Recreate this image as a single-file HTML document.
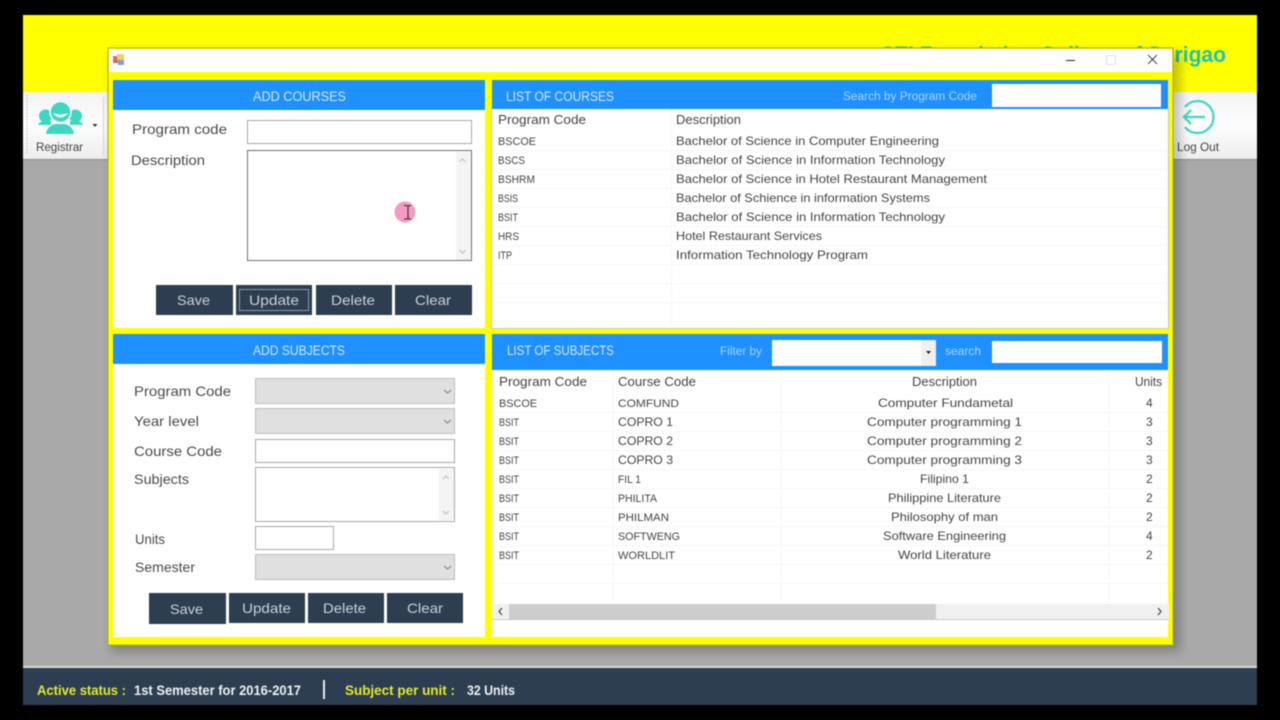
<!DOCTYPE html>
<html><head><meta charset="utf-8"><style>
html,body{margin:0;padding:0;background:#000;overflow:hidden}
svg{display:block;filter:blur(.4px)}
text{font-family:"Liberation Sans",sans-serif;fill:#444}
.d text{font-size:12px}
.d text.c{font-size:11px}
.l text{font-size:14px;fill:#4a4a4a}
.b text{font-size:14px;fill:#c9d2da}
.h text{font-size:13.5px;fill:#cfe8ff}
.s text{font-size:13.5px;font-weight:bold}
</style></head><body>
<svg width="1280" height="720" viewBox="0 0 1280 720" xmlns="http://www.w3.org/2000/svg">
<defs>
<linearGradient id="tb" x1="0" y1="0" x2="0" y2="1"><stop offset="0" stop-color="#f4f4f4"/><stop offset=".5" stop-color="#fdfdfd"/><stop offset="1" stop-color="#ececec"/></linearGradient>
<filter id="sh" x="-5%" y="-5%" width="110%" height="110%"><feGaussianBlur stdDeviation="5"/></filter>
</defs>
<rect width="1280" height="720" fill="#000"/>
<rect x="23" y="15" width="1234" height="77" fill="#ff0"/>
<text x="881" y="62" font-size="22" font-weight="bold" style="fill:#25c2ad" textLength="345" lengthAdjust="spacingAndGlyphs">STI Foundation College of Surigao</text>
<rect x="23" y="92" width="1234" height="68" fill="url(#tb)"/>
<rect x="23" y="159" width="1234" height="1" fill="#8a8a8a"/>
<rect x="23" y="160" width="1234" height="506" fill="#a9a9a9"/>
<rect x="23" y="666" width="1234" height="2" fill="#d8d8d8"/>
<rect x="23" y="668" width="1234" height="37" fill="#2c3e50"/>
<line x1="27" y1="95" x2="27" y2="155" stroke="#aaa" stroke-dasharray="1 2"/>
<rect x="103" y="97" width="1" height="58" fill="#d8d8d8"/>

<g fill="#3fd7c1">
<circle cx="45.500" cy="116" r="6.500"/><circle cx="75.500" cy="116" r="6.500"/>
<path d="M38 125q1-4 8-4h5v4zM83 125q-1-4-8-4h-5v4z"/>
<path d="M46 134q1-8 9-10h10q8 2 9 10z"/>
<circle cx="60.500" cy="112" r="10.500" stroke="#fafafa" stroke-width="1.500"/>
</g>
<path d="M52.500 113q8 9 16 0q-8 3-16 0z" fill="#fafafa"/>
<path d="M92.500 124h5l-2.500 3z" fill="#333"/>
<text x="36" y="151" font-size="11.500" textLength="47" lengthAdjust="spacingAndGlyphs">Registrar</text>

<path d="M1185 107a16 16 0 1 1 0 20" fill="none" stroke="#3fd7c1" stroke-width="2.200"/>
<path d="M1205 117h-21M1191 110l-7 7 7 7" fill="none" stroke="#3fd7c1" stroke-width="2.200"/>
<text x="1177" y="151" font-size="11.500" textLength="42" lengthAdjust="spacingAndGlyphs">Log Out</text>

<g class="s">
<text x="37" y="695" style="fill:#e4e82e" textLength="89" lengthAdjust="spacingAndGlyphs">Active status :</text>
<text x="134" y="695" style="fill:#eef1f3" textLength="167" lengthAdjust="spacingAndGlyphs">1st Semester for 2016-2017</text>
<text x="345" y="695" style="fill:#e4e82e" textLength="110" lengthAdjust="spacingAndGlyphs">Subject per unit :</text>
<text x="467" y="695" style="fill:#eef1f3" textLength="48" lengthAdjust="spacingAndGlyphs">32 Units</text>
</g>
<rect x="323" y="680" width="2" height="19" fill="#e8e8e8"/>

<rect x="111" y="52" width="1070" height="600" fill="#000" opacity=".22" filter="url(#sh)"/>
<rect x="108" y="48" width="1065" height="597" fill="#ff0"/>
<rect x="108" y="48" width="1065" height="597" fill="none" stroke="#a8a830"/>
<rect x="109" y="49" width="1063" height="23" fill="#fff"/>

<rect x="113" y="56" width="5" height="7" fill="#dc6a5c"/>
<rect x="117" y="54" width="7" height="6" fill="#f3cf6a"/>
<rect x="118" y="60" width="6" height="5" fill="#7aa2de"/>

<rect x="1066" y="60" width="9" height="1" fill="#222"/>
<rect x="1106.500" y="55.500" width="9" height="9" fill="none" stroke="#e2e2e2"/>
<path d="M1148 55l9 9M1157 55l-9 9" stroke="#444" stroke-width="1"/>

<rect x="113" y="80" width="372" height="248" fill="#fff"/>
<rect x="113" y="80" width="372" height="30" fill="#1e90ff"/>
<rect x="113" y="334" width="372" height="303" fill="#fff"/>
<rect x="113" y="334" width="372" height="30" fill="#1e90ff"/>
<rect x="492" y="80" width="676" height="248" fill="#fff"/>
<rect x="491.500" y="108.500" width="677" height="220" fill="none" stroke="#c4c4c4"/>
<rect x="492" y="80" width="676" height="29" fill="#1e90ff"/>
<rect x="492" y="334" width="676" height="303" fill="#fff"/>
<rect x="492" y="334" width="676" height="36" fill="#1e90ff"/>

<g class="h">
<text x="253" y="101" textLength="93" lengthAdjust="spacingAndGlyphs">ADD COURSES</text>
<text x="253" y="355" textLength="92" lengthAdjust="spacingAndGlyphs">ADD SUBJECTS</text>
<text x="506" y="101" textLength="108" lengthAdjust="spacingAndGlyphs">LIST OF COURSES</text>
<text x="507" y="355" textLength="107" lengthAdjust="spacingAndGlyphs">LIST OF SUBJECTS</text>
</g>
<text x="843" y="100" font-size="11.500" style="fill:#a8d4ff" textLength="134" lengthAdjust="spacingAndGlyphs">Search by Program Code</text>
<text x="720" y="355" font-size="11.500" style="fill:#a8d4ff" textLength="42" lengthAdjust="spacingAndGlyphs">Filter by</text>
<text x="945" y="355" font-size="11.500" style="fill:#a8d4ff" textLength="36" lengthAdjust="spacingAndGlyphs">search</text>
<rect x="992" y="84" width="169" height="23" fill="#fff"/>
<rect x="772" y="340" width="164" height="26" fill="#fff"/>
<rect x="921" y="340" width="15" height="26" fill="#f0f0f0"/>
<path d="M926 351h5l-2.500 3z" fill="#222"/>
<rect x="992" y="341" width="170" height="22" fill="#fff"/>

<g fill="#fff" stroke="#a8a8a8">
<rect x="247.500" y="120.500" width="224" height="23"/>
<rect x="255.500" y="439.500" width="199" height="23"/>
<rect x="255.500" y="526.500" width="78" height="23"/>
<rect x="255.500" y="467.500" width="199" height="54"/>
</g>
<rect x="247.500" y="150.500" width="224" height="110" fill="#fff" stroke="#707070"/>
<rect x="456" y="152" width="15" height="108" fill="#f4f4f4"/>
<rect x="439" y="469" width="15" height="51" fill="#f4f4f4"/>
<g fill="none" stroke="#c0c0c0" stroke-width="1.200">
<path d="M459.500 162l3-3 3 3M459.500 250l3 3 3-3M443 479l3-3 3 3M443 511l3 3 3-3"/>
</g>
<g fill="#e0e0e0" stroke="#bcbcbc">
<rect x="255.500" y="378.500" width="199" height="25"/>
<rect x="255.500" y="408.500" width="199" height="25"/>
<rect x="255.500" y="554.500" width="199" height="25"/>
</g>
<g fill="none" stroke="#808080" stroke-width="1.100">
<path d="M444 390l3.500 3 3.500-3M444 420l3.500 3 3.500-3M444 566l3.500 3 3.500-3"/>
</g>

<g class="l">
<text x="132" y="134" textLength="95" lengthAdjust="spacingAndGlyphs">Program code</text>
<text x="131" y="165" textLength="74" lengthAdjust="spacingAndGlyphs">Description</text>
<text x="134" y="396" textLength="97" lengthAdjust="spacingAndGlyphs">Program Code</text>
<text x="134" y="426" textLength="65" lengthAdjust="spacingAndGlyphs">Year level</text>
<text x="134" y="456" textLength="88" lengthAdjust="spacingAndGlyphs">Course Code</text>
<text x="134" y="484" textLength="55" lengthAdjust="spacingAndGlyphs">Subjects</text>
<text x="135" y="544" textLength="30" lengthAdjust="spacingAndGlyphs">Units</text>
<text x="135" y="572" textLength="60" lengthAdjust="spacingAndGlyphs">Semester</text>
</g>

<g fill="#2c3e50">
<rect x="156" y="285" width="77" height="30"/>
<rect x="236" y="285" width="76" height="30"/>
<rect x="316" y="285" width="76" height="30"/>
<rect x="395" y="285" width="77" height="30"/>
<rect x="149" y="593" width="77" height="31"/>
<rect x="229" y="593" width="76" height="30"/>
<rect x="308" y="593" width="76" height="30"/>
<rect x="387" y="593" width="76" height="30"/>
</g>
<rect x="239.500" y="289.500" width="69" height="21" fill="none" stroke="#8c9aa8"/>
<g class="b">
<text x="177" y="305" textLength="33" lengthAdjust="spacingAndGlyphs">Save</text>
<text x="249" y="305" textLength="50" lengthAdjust="spacingAndGlyphs">Update</text>
<text x="331" y="305" textLength="44" lengthAdjust="spacingAndGlyphs">Delete</text>
<text x="415" y="305" textLength="36" lengthAdjust="spacingAndGlyphs">Clear</text>
<text x="170" y="614" textLength="33" lengthAdjust="spacingAndGlyphs">Save</text>
<text x="242" y="613" textLength="49" lengthAdjust="spacingAndGlyphs">Update</text>
<text x="323" y="613" textLength="43" lengthAdjust="spacingAndGlyphs">Delete</text>
<text x="407" y="613" textLength="36" lengthAdjust="spacingAndGlyphs">Clear</text>
</g>

<g stroke="#f6f6f6">
<path d="M671.500 109v216"/>
<path d="M493 150.500h674M493 169.500h674M493 188.500h674M493 207.500h674M493 226.500h674M493 245.500h674M493 264.500h674M493 283.500h674M493 302.500h674"/>
<path d="M613.500 371v231M781.500 371v231M1108.500 371v231"/>
<path d="M493 412.500h675M493 431.500h675M493 450.500h675M493 469.500h675M493 488.500h675M493 507.500h675M493 526.500h675M493 545.500h675M493 564.500h675M493 583.500h675"/>
</g>

<g class="d">
<text x="498" y="124" style="font-size:12.500px" textLength="88" lengthAdjust="spacingAndGlyphs">Program Code</text>
<text x="676" y="124" style="font-size:12.500px" textLength="65" lengthAdjust="spacingAndGlyphs">Description</text>
<text class="c" x="498" y="145" textLength="38" lengthAdjust="spacingAndGlyphs">BSCOE</text>
<text class="c" x="498" y="164" textLength="27" lengthAdjust="spacingAndGlyphs">BSCS</text>
<text class="c" x="498" y="183" textLength="37" lengthAdjust="spacingAndGlyphs">BSHRM</text>
<text class="c" x="498" y="202" textLength="20" lengthAdjust="spacingAndGlyphs">BSIS</text>
<text class="c" x="498" y="221" textLength="20" lengthAdjust="spacingAndGlyphs">BSIT</text>
<text class="c" x="498" y="240" textLength="21" lengthAdjust="spacingAndGlyphs">HRS</text>
<text class="c" x="498" y="259" textLength="14" lengthAdjust="spacingAndGlyphs">ITP</text>
<text x="676" y="145" textLength="263" lengthAdjust="spacingAndGlyphs">Bachelor of Science in Computer Engineering</text>
<text x="676" y="164" textLength="269" lengthAdjust="spacingAndGlyphs">Bachelor of Science in Information Technology</text>
<text x="676" y="183" textLength="311" lengthAdjust="spacingAndGlyphs">Bachelor of Science in Hotel Restaurant Management</text>
<text x="676" y="202" textLength="254" lengthAdjust="spacingAndGlyphs">Bachelor of Schience in information Systems</text>
<text x="676" y="221" textLength="269" lengthAdjust="spacingAndGlyphs">Bachelor of Science in Information Technology</text>
<text x="676" y="240" textLength="146" lengthAdjust="spacingAndGlyphs">Hotel Restaurant Services</text>
<text x="676" y="259" textLength="192" lengthAdjust="spacingAndGlyphs">Information Technology Program</text>

<text x="499" y="386" style="font-size:12.500px" textLength="88" lengthAdjust="spacingAndGlyphs">Program Code</text>
<text x="618" y="386" style="font-size:12.500px" textLength="78" lengthAdjust="spacingAndGlyphs">Course Code</text>
<text x="912" y="386" style="font-size:12.500px" textLength="65" lengthAdjust="spacingAndGlyphs">Description</text>
<text x="1135" y="386" style="font-size:12.500px" textLength="27" lengthAdjust="spacingAndGlyphs">Units</text>

<text class="c" x="499" y="407" textLength="38" lengthAdjust="spacingAndGlyphs">BSCOE</text>
<text class="c" x="499" y="426" textLength="20" lengthAdjust="spacingAndGlyphs">BSIT</text>
<text class="c" x="499" y="445" textLength="20" lengthAdjust="spacingAndGlyphs">BSIT</text>
<text class="c" x="499" y="464" textLength="20" lengthAdjust="spacingAndGlyphs">BSIT</text>
<text class="c" x="499" y="483" textLength="20" lengthAdjust="spacingAndGlyphs">BSIT</text>
<text class="c" x="499" y="502" textLength="20" lengthAdjust="spacingAndGlyphs">BSIT</text>
<text class="c" x="499" y="521" textLength="20" lengthAdjust="spacingAndGlyphs">BSIT</text>
<text class="c" x="499" y="540" textLength="20" lengthAdjust="spacingAndGlyphs">BSIT</text>
<text class="c" x="499" y="559" textLength="20" lengthAdjust="spacingAndGlyphs">BSIT</text>

<text class="c" x="618" y="407" textLength="61" lengthAdjust="spacingAndGlyphs">COMFUND</text>
<text x="618" y="426" textLength="55" lengthAdjust="spacingAndGlyphs">COPRO 1</text>
<text x="618" y="445" textLength="55" lengthAdjust="spacingAndGlyphs">COPRO 2</text>
<text x="618" y="464" textLength="55" lengthAdjust="spacingAndGlyphs">COPRO 3</text>
<text class="c" x="618" y="483" textLength="23" lengthAdjust="spacingAndGlyphs">FIL 1</text>
<text class="c" x="618" y="502" textLength="39" lengthAdjust="spacingAndGlyphs">PHILITA</text>
<text class="c" x="618" y="521" textLength="51" lengthAdjust="spacingAndGlyphs">PHILMAN</text>
<text class="c" x="618" y="540" textLength="62" lengthAdjust="spacingAndGlyphs">SOFTWENG</text>
<text class="c" x="618" y="559" textLength="57" lengthAdjust="spacingAndGlyphs">WORLDLIT</text>

<text x="878" y="407" textLength="135" lengthAdjust="spacingAndGlyphs">Computer Fundametal</text>
<text x="867" y="426" textLength="155" lengthAdjust="spacingAndGlyphs">Computer programming 1</text>
<text x="867" y="445" textLength="155" lengthAdjust="spacingAndGlyphs">Computer programming 2</text>
<text x="867" y="464" textLength="155" lengthAdjust="spacingAndGlyphs">Computer programming 3</text>
<text x="920" y="483" textLength="49" lengthAdjust="spacingAndGlyphs">Filipino 1</text>
<text x="888" y="502" textLength="113" lengthAdjust="spacingAndGlyphs">Philippine Literature</text>
<text x="891" y="521" textLength="107" lengthAdjust="spacingAndGlyphs">Philosophy of man</text>
<text x="883" y="540" textLength="123" lengthAdjust="spacingAndGlyphs">Software Engineering</text>
<text x="898" y="559" textLength="93" lengthAdjust="spacingAndGlyphs">World Literature</text>

<text x="1146" y="407">4</text>
<text x="1146" y="426">3</text>
<text x="1146" y="445">3</text>
<text x="1146" y="464">3</text>
<text x="1146" y="483">2</text>
<text x="1146" y="502">2</text>
<text x="1146" y="521">2</text>
<text x="1146" y="540">4</text>
<text x="1146" y="559">2</text>
</g>

<rect x="492" y="604" width="677" height="15" fill="#f0f0f0"/>
<rect x="492" y="619" width="677" height="1" fill="#c8c8c8"/>
<rect x="509" y="604" width="427" height="15" fill="#cdcdcd"/>
<path d="M502 608l-3 3.500 3 3.500M1158 608l3 3.500-3 3.500" fill="none" stroke="#444" stroke-width="1.200"/>

<circle cx="405" cy="212" r="10.500" fill="#f59ac4"/>
<path d="M404 205.500h3l1 1 1-1h2M408 206.500v12M404 219h3l1-1 1 1h2" fill="none" stroke="#333" stroke-width="1.100"/>
</svg>
</body></html>
